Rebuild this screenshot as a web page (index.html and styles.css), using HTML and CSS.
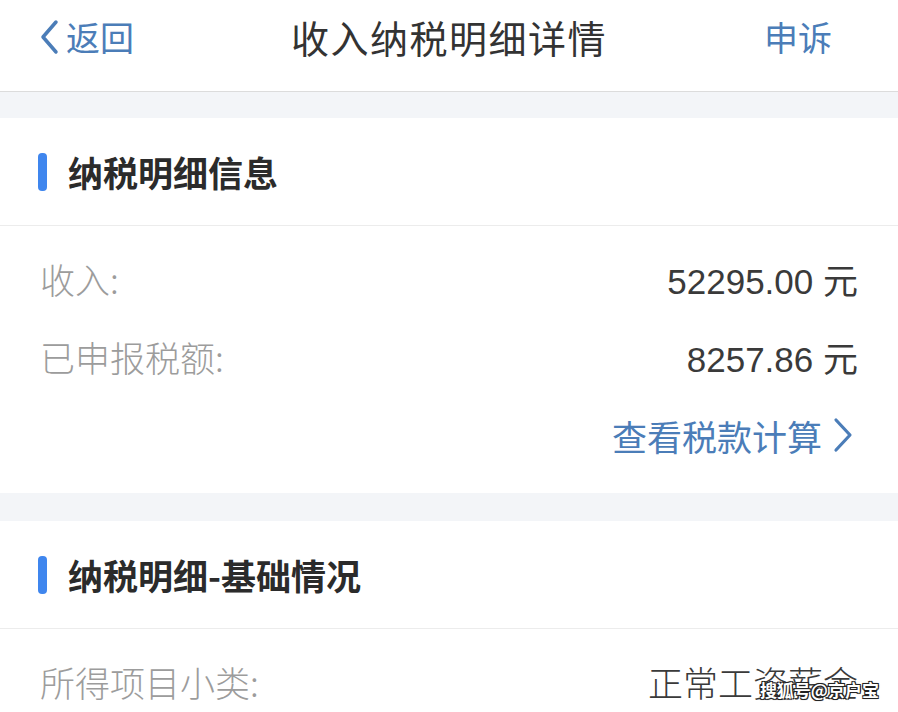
FILE: index.html
```html
<!DOCTYPE html>
<html lang="zh">
<head>
<meta charset="utf-8">
<title>收入纳税明细详情</title>
<link rel="stylesheet" href="styles.css">
</head>
<body>
<header class="nav">
  <div class="nav-left">
    <svg class="back-icon" width="22" height="36" viewBox="0 0 22 36"><path d="M18 3 L5 18 L18 33" fill="none" stroke="#4b7db8" stroke-width="3.5" stroke-linecap="round" stroke-linejoin="round"/></svg>
    <span>返回</span>
  </div>
  <div class="nav-title">收入纳税明细详情</div>
  <div class="nav-right">申诉</div>
</header>

<section class="card">
  <div class="card-head"><span class="bar"></span><h2>纳税明细信息</h2></div>
  <div class="card-body">
    <div class="row"><span class="label">收入:</span><span class="value">52295.00 元</span></div>
    <div class="row"><span class="label">已申报税额:</span><span class="value">8257.86 元</span></div>
    <div class="row link-row">
      <span class="link">查看税款计算</span>
      <svg class="chev" width="22" height="36" viewBox="0 0 22 36"><path d="M4 3 L18 18 L4 33" fill="none" stroke="#4b7db8" stroke-width="3.2" stroke-linecap="round" stroke-linejoin="round"/></svg>
    </div>
  </div>
</section>

<section class="card card2">
  <div class="card-head"><span class="bar"></span><h2>纳税明细-基础情况</h2></div>
  <div class="card-body">
    <div class="row"><span class="label">所得项目小类:</span><span class="value cjk">正常工资薪金</span></div>
  </div>
</section>

<div class="watermark">搜狐号@京户宝</div>
</body>
</html>
```

FILE: styles.css
```css
* { box-sizing: border-box; }
html, body {
  margin: 0;
  padding: 0;
}
body {
  width: 898px;
  height: 712px;
  overflow: hidden;
  background: #f3f5f8;
  font-family: "Noto Sans CJK SC", "Liberation Sans", sans-serif;
  position: relative;
}
.nav {
  height: 92px;
  background: #fff;
  border-bottom: 1px solid #dcdcdc;
  display: grid;
  grid-template-columns: 1fr auto 1fr;
  align-items: start;
  padding: 12px 38px 0 38px;
}
.nav-left {
  display: flex;
  align-items: center;
  gap: 6px;
  color: #4b7db8;
  font-size: 34px;
  line-height: 50px;
}
.back-icon { display: block; }
.nav-title {
  font-size: 38px;
  line-height: 50px;
  color: #333;
  letter-spacing: 1.5px;
}
.nav-right {
  text-align: right;
  color: #4b7db8;
  font-size: 34px;
  line-height: 50px;
  padding-right: 28px;
}
.card {
  background: #fff;
  margin-top: 26px;
}
.card2 { margin-top: 28px; }
.card-head {
  height: 108px;
  display: flex;
  align-items: center;
  padding-left: 38px;
  border-bottom: 1px solid #ececec;
}
.bar {
  width: 9px;
  height: 38px;
  border-radius: 4px;
  background: #3f86ee;
  margin-right: 21px;
}
.card-head h2 {
  margin: 0;
  font-size: 35px;
  font-weight: 700;
  color: #2b2b2b;
}
.card-body {
  padding: 13px 40px 18px 40px;
}
.row {
  height: 78px;
  display: flex;
  align-items: center;
  justify-content: space-between;
}
.label {
  font-size: 35px;
  font-weight: 300;
  color: #9c9c9c;
}
.value {
  font-family: "Liberation Sans", "Noto Sans CJK SC", sans-serif;
  font-size: 35px;
  color: #3a3a3a;
}
.value.cjk {
  font-family: "Noto Sans CJK SC", sans-serif;
  font-weight: 300;
}
.link-row {
  height: 80px;
  justify-content: flex-end;
  gap: 10px;
  padding-right: 4px;
}
.link {
  font-size: 35px;
  color: #4b7db8;
}
.chev { display: block; }
.watermark {
  position: absolute;
  right: 19px;
  bottom: 10px;
  font-size: 17px;
  font-weight: 700;
  color: #fff;
  text-shadow: -1px -1px 0 #222, 1px -1px 0 #222, -1px 1px 0 #222, 1px 1px 0 #222, 0 0 2px #000;
}
```
